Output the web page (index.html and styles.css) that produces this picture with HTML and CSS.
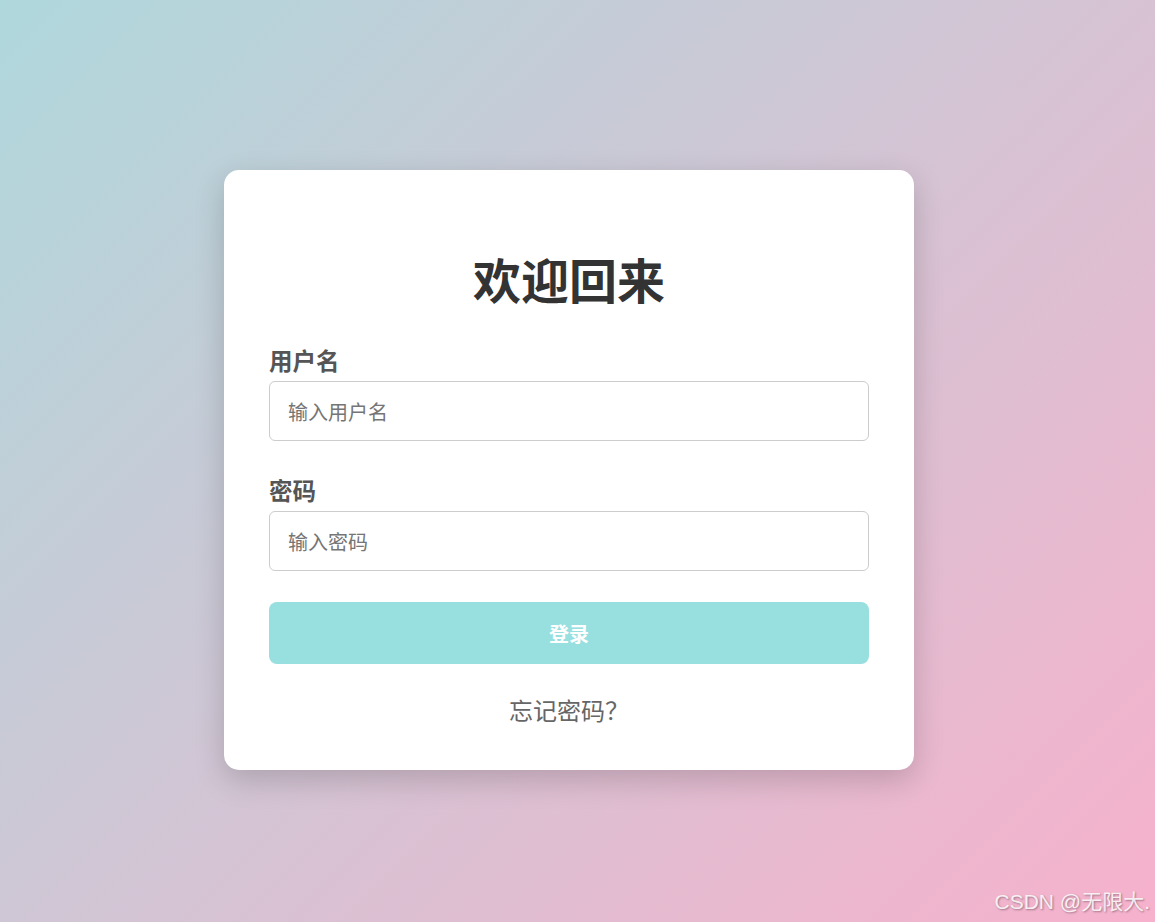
FILE: index.html
```html
<!DOCTYPE html>
<html lang="zh-CN">
<head>
    <meta charset="UTF-8">
    <meta name="viewport" content="width=device-width, initial-scale=1.0">
    <title>登录</title>
    <link rel="stylesheet" href="styles.css">
</head>
<body>
    <div class="login-card">
        <h1 class="title">欢迎回来</h1>
        <form class="login-form">
            <div class="field">
                <label for="username">用户名</label>
                <input type="text" id="username" placeholder="输入用户名">
            </div>
            <div class="field">
                <label for="password">密码</label>
                <input type="password" id="password" placeholder="输入密码">
            </div>
            <button type="button" class="btn-login">登录</button>
        </form>
        <a href="#" class="forgot">忘记密码？</a>
    </div>

    <div class="watermark">CSDN @无限大.</div>
</body>
</html>
```

FILE: styles.css
```css
* {
    box-sizing: border-box;
}
html, body {
    margin: 0;
    height: 100%;
}
body {
    display: flex;
    justify-content: center;
    align-items: center;
    min-height: 100vh;
    padding: 18px 17px 0 0;
    background: linear-gradient(135deg, #afd8dc, #f7b1cc);
    font-family: "Noto Sans CJK SC", "Noto Sans", sans-serif;
    position: relative;
    overflow: hidden;
}
.login-card {
    width: 690px;
    background: #fff;
    border-radius: 15px;
    padding: 45px 45px 45px;
    box-shadow: 0 10px 30px rgba(0, 0, 0, 0.18);
    text-align: center;
}
.title {
    margin: 34px 0 39px;
    font-size: 48px;
    line-height: 58px;
    font-weight: 700;
    color: #333;
}
.login-form {
    text-align: left;
}
.field {
    margin-bottom: 35px;
}
.field:last-of-type {
    margin-bottom: 31px;
}
.field label {
    display: block;
    font-size: 23.5px;
    line-height: 28px;
    font-weight: 700;
    color: #555;
    margin-bottom: 7px;
}
.field input {
    display: block;
    width: 100%;
    height: 60px;
    padding: 0 18px;
    border: 1px solid #ccc;
    border-radius: 6px;
    font-family: inherit;
    font-size: 20px;
    color: #333;
    outline: none;
}
.field input::placeholder {
    color: #757575;
}
.btn-login {
    display: block;
    width: 100%;
    height: 62px;
    border: none;
    border-radius: 8px;
    background: #98dfe0;
    color: #fff;
    font-family: inherit;
    font-size: 20px;
    font-weight: 700;
    cursor: pointer;
}
.forgot {
    display: inline-block;
    margin-top: 31px;
    font-size: 24px;
    line-height: 30px;
    color: #666;
    text-decoration: none;
}
.watermark {
    position: absolute;
    right: 5px;
    bottom: 7px;
    font-family: "Liberation Sans", "Noto Sans CJK SC", sans-serif;
    font-size: 21px;
    color: rgba(255, 255, 255, 0.85);
    text-shadow: 1px 1px 2px rgba(0, 0, 0, 0.35);
}
```
